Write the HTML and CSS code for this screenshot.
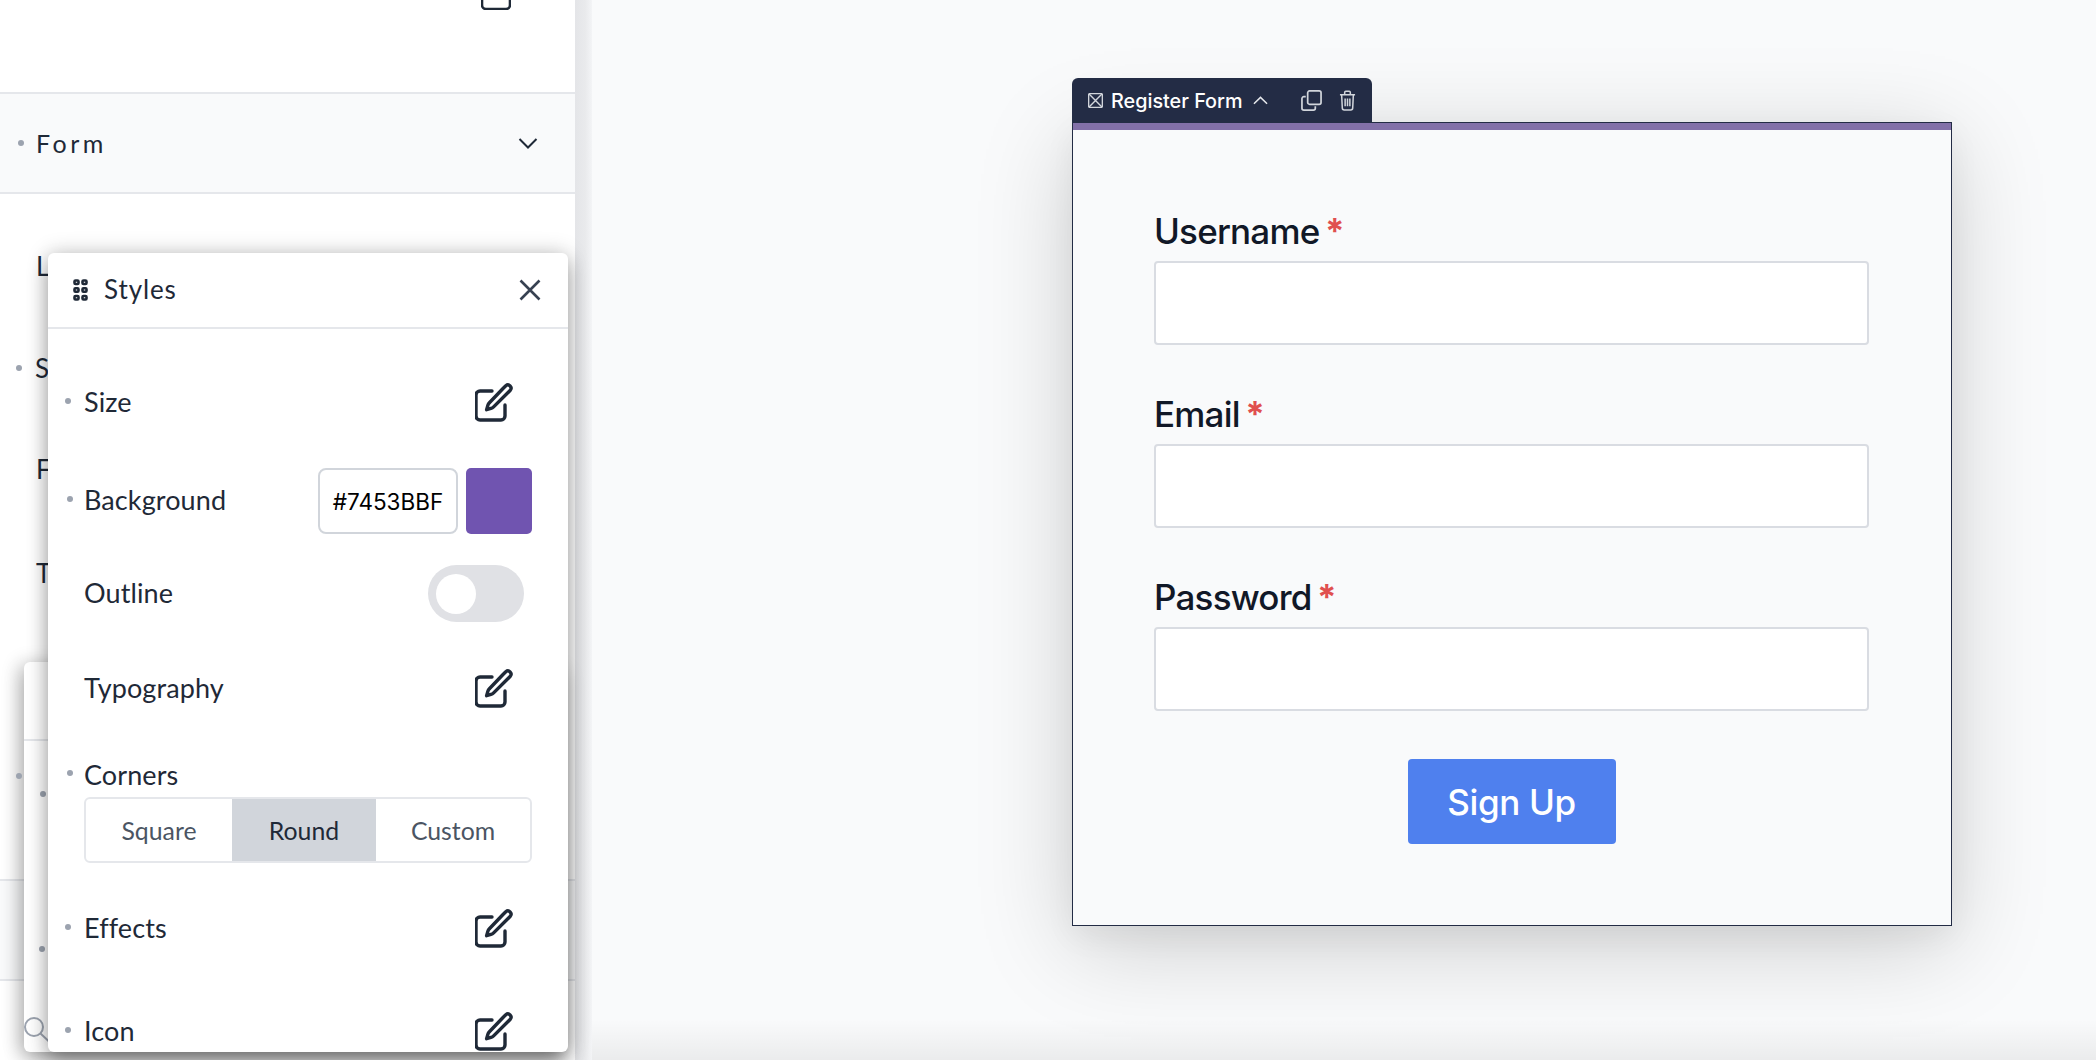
FILE: index.html
```html
<!DOCTYPE html>
<html lang="en">
<head>
<meta charset="utf-8">
<title>Register Form</title>
<link rel="stylesheet" href="styles.css">
</head>
<body>
<svg class="sprite" width="0" height="0">
  <symbol id="edit" viewBox="0 0 38 40">
    <path d="M28 5.500 30.800 2.700a3.200 3.200 0 0 1 4.500 4.500L18.600 23.900a6 6 0 0 1-2.600 1.500l-4.400 1.300 1.300-4.400a6 6 0 0 1 1.500-2.600L28 5.500Z"/>
    <path d="M30 22V33a4 4 0 0 1-4 4H5a4 4 0 0 1-4-4V12a4 4 0 0 1 4-4H17"/>
  </symbol>
</svg>
<aside class="sidebar">
  <div class="side-top">
    <svg class="top-icon" viewBox="0 0 30 10"><path d="M1 0V5a4 4 0 0 0 4 4H25a4 4 0 0 0 4-4V0"/></svg>
  </div>
  <div class="side-head">
    <span class="dot"></span><span class="side-title">Form</span>
    <svg class="chev" viewBox="0 0 20 12"><path d="M1.500 2 10 10.500 18.500 2"/></svg>
  </div>
  <div class="side-body">
    <div class="ghost ghost-l">L</div>
    <div class="ghost ghost-s"><span class="dot"></span>S</div>
    <div class="ghost ghost-f">F</div>
    <div class="ghost ghost-t">T</div>
  </div>
  <div class="back-band"></div>
  <div class="panel-back">
    <div class="back-line"></div>
    <div class="back-dots"><span class="dot dot-a"></span><span class="dot dot-b"></span><span class="dot dot-c"></span></div>
    <div class="back-search">
      <svg class="search" viewBox="0 0 26 25"><circle cx="10" cy="10" r="9"/><path d="M16.500 16.500 25 24.500"/></svg>
    </div>
  </div>
  <section class="panel">
    <header class="panel-head">
      <svg class="grip" viewBox="0 0 15 22"><rect x="1.500" y="1.500" width="4" height="3.500" rx="1"/><rect x="9.500" y="1.500" width="4" height="3.500" rx="1"/><rect x="1.500" y="9.200" width="4" height="3.500" rx="1"/><rect x="9.500" y="9.200" width="4" height="3.500" rx="1"/><rect x="1.500" y="17" width="4" height="3.500" rx="1"/><rect x="9.500" y="17" width="4" height="3.500" rx="1"/></svg>
      <span class="panel-title">Styles</span>
      <svg class="close" viewBox="0 0 22 22"><path d="M1.500 1.500 20.500 20.500M20.500 1.500 1.500 20.500"/></svg>
    </header>
    <div class="row row-size"><span class="dot"></span><span class="lbl">Size</span><svg class="edit"><use href="#edit"/></svg></div>
    <div class="row row-bg"><span class="dot dot-up"></span><span class="lbl lbl-up">Background</span>
      <span class="hex">#7453BBF</span><span class="swatch"></span></div>
    <div class="row row-outline"><span class="lbl lbl-plain lbl-up">Outline</span><span class="toggle"><span class="knob"></span></span></div>
    <div class="row row-typo"><span class="lbl lbl-plain">Typography</span><svg class="edit"><use href="#edit"/></svg></div>
    <div class="corners">
      <div class="corners-head"><span class="dot dot-up"></span><span class="lbl">Corners</span></div>
      <div class="seg"><span class="seg-item seg-a">Square</span><span class="seg-item seg-on">Round</span><span class="seg-item seg-c">Custom</span></div>
    </div>
    <div class="row row-effects"><span class="dot"></span><span class="lbl">Effects</span><svg class="edit"><use href="#edit"/></svg></div>
    <div class="row row-icon"><span class="dot"></span><span class="lbl">Icon</span><svg class="edit"><use href="#edit"/></svg></div>
  </section>
</aside>
<div class="gutter"></div>
<main class="canvas">
  <div class="toolbar">
    <svg class="tb-move" viewBox="0 0 14 14"><rect x=".6" y=".6" width="12.800" height="12.800" rx="1"/><path d="M1 1 13 13M13 1 1 13"/></svg>
    <span class="tb-title">Register Form</span>
    <svg class="tb-chev" viewBox="0 0 16 9"><path d="M1 8 8 1.200 15 8"/></svg>
    <svg class="tb-copy" viewBox="0 0 22 22"><rect x="7" y="1" width="14" height="14" rx="2"/><path d="M5 7H3a2 2 0 0 0-2 2V19a2 2 0 0 0 2 2H13a2 2 0 0 0 2-2V17"/></svg>
    <svg class="tb-trash" viewBox="0 0 18 22"><path d="M1 5H17M6 5V2.500A1.200 1.200 0 0 1 7.200 1.300H10.800A1.200 1.200 0 0 1 12 2.500V5M2.800 5 3.500 19a2 2 0 0 0 2 2H12.500a2 2 0 0 0 2-2L15.200 5M6.500 9V17M9 9V17M11.500 9V17"/></svg>
  </div>
  <form class="card">
    <div class="field">
      <label class="f-label">Username <span class="req">*</span></label>
      <div class="f-input"></div>
    </div>
    <div class="field">
      <label class="f-label">Email <span class="req">*</span></label>
      <div class="f-input"></div>
    </div>
    <div class="field">
      <label class="f-label">Password <span class="req">*</span></label>
      <div class="f-input"></div>
    </div>
    <div class="actions"><button class="submit" type="button">Sign Up</button></div>
  </form>
</main>
</body>
</html>
```
FILE: styles.css
```css
* { box-sizing: border-box; }
html, body { margin: 0; height: 1060px; overflow: hidden; }
body { display: flex; background: #f9fafb; font-family: "Lato", "Noto Sans", sans-serif; color: #1f2937; }
.sprite { position: absolute; }

.sidebar { position: relative; width: 575px; height: 1060px; background: #fff; flex: none; }
.gutter { width: 17px; flex: none; background: linear-gradient(90deg, #e4e5e8, #e9eaec 60%, #f3f4f6); }
.side-top { height: 94px; border-bottom: 2px solid #e5e7eb; padding: 0 0 0 481px; }
.top-icon { display: block; width: 30px; height: 10px; fill: none; stroke: #1f2937; stroke-width: 2.6; }
.side-head { height: 100px; background: #f9fafb; border-bottom: 2px solid #e5e7eb; display: flex; align-items: center; padding-left: 18px; }
.dot { width: 6px; height: 6px; border-radius: 50%; background: #9ca3af; flex: none; }
.side-title { margin-left: 12px; font-size: 25px; letter-spacing: 3.500px; }
.chev { margin-left: auto; margin-right: 37px; width: 20px; height: 12px; fill: none; stroke: #1f2937; stroke-width: 2; }
.ghost { position: absolute; left: 36px; font-size: 26px; }
.ghost-l { top: 250px; }
.ghost-s { top: 352px; left: 16px; display: flex; align-items: center; gap: 13px; }
.ghost-f { top: 453px; }
.ghost-t { top: 557px; }

.back-band { position: absolute; left: 0; right: 0; top: 879px; height: 102px; background: #f9fafb; border-top: 2px solid #e5e7eb; border-bottom: 2px solid #e5e7eb; }
.panel-back { position: absolute; left: 24px; top: 662px; width: 540px; height: 390px; background: #fff; border-radius: 6px; box-shadow: 0 10px 20px rgba(0,0,0,.25), -6px 0 18px rgba(0,0,0,.16); }
.back-line { margin-top: 77px; border-top: 2px solid #e5e7eb; }
.back-dots { position: absolute; left: -24px; top: 100px; }
.dot-a { position: absolute; left: 16px; top: 11px; }
.dot-b { position: absolute; left: 40px; top: 29px; }
.dot-c { position: absolute; left: 39px; top: 184px; }
.back-search { position: absolute; left: 0; top: 355px; }
.search { width: 26px; height: 25px; fill: none; stroke: #9ca3af; stroke-width: 2; display: block; }

.panel { position: absolute; left: 48px; top: 253px; width: 520px; height: 799px; background: #fff; border-radius: 6px; box-shadow: 0 10px 20px rgba(0,0,0,.28), 0 0 22px rgba(0,0,0,.2); overflow: hidden; }
.panel-head { height: 76px; border-bottom: 2px solid #e5e7eb; display: flex; align-items: center; padding: 0 27px 0 25px; }
.grip { width: 15px; height: 22px; fill: none; stroke: #1f2937; stroke-width: 2.6; }
.panel-title { margin: -2px 0 0 16px; font-size: 26px; letter-spacing: .9px; }
.close { margin-left: auto; width: 22px; height: 22px; fill: none; stroke: #374151; stroke-width: 2.6; }
.row { display: flex; align-items: center; padding: 0 0 0 17px; }
.lbl { font-size: 27px; margin-left: 13px; letter-spacing: .1px; }
.lbl-plain { margin-left: 19px; }
.lbl-up { margin-bottom: 3px; }
.edit { width: 38px; height: 40px; margin: 3px 55px 0 auto; fill: none; stroke: #1f2937; stroke-width: 3.4; stroke-linejoin: round; stroke-linecap: round; }
.row-size { height: 70px; margin-top: 37px; }
.row-bg { height: 66px; margin-top: 32px; }
.row-outline { height: 57px; margin-top: 31px; }
.row-typo { height: 40px; margin-top: 45px; }
.dot-up { margin: -4px -2px 0 2px; }
.hex { margin-left: auto; width: 140px; height: 66px; border: 2px solid #d1d5db; border-radius: 8px; display: flex; align-items: center; justify-content: center; font: 22.500px "Inter", sans-serif; color: #000; }
.swatch { width: 66px; height: 66px; margin: 0 36px 0 8px; background: #7054b0; border-radius: 5px; }
.toggle { margin-left: auto; margin-right: 44px; width: 96px; height: 57px; border-radius: 29px; background: #e0e1e5; padding: 9px 8px; }
.knob { display: block; width: 40px; height: 40px; border-radius: 50%; background: #fff; }
.corners { margin-top: 51px; padding: 0 36px 0 17px; }
.corners-head { display: flex; align-items: center; }
.seg { margin: 6px 0 0 19px; height: 66px; display: flex; border: 2px solid #e5e7eb; border-radius: 6px; overflow: hidden; }
.seg-item { display: flex; align-items: center; justify-content: center; font-size: 24.800px; color: #4b5563; }
.seg-a { width: 146px; }
.seg-on { width: 144px; background: #d1d5db; color: #1f2937; }
.seg-c { flex: 1; }
.row-effects { height: 40px; margin-top: 44px; }
.row-icon { height: 40px; margin-top: 63px; }

.canvas { flex: 1; padding: 78px 0 0 480px; position: relative; }
.canvas::after { content: ""; position: absolute; left: 0; right: 0; bottom: 0; height: 40px; background: linear-gradient(transparent, rgba(0,0,0,.06)); }
.toolbar { width: 300px; height: 45px; background: #232c45; border-radius: 6px 6px 0 0; display: flex; align-items: center; padding-left: 16px; color: #fff; position: relative; z-index: 1; margin-bottom: -1px; }
.tb-move { width: 15px; height: 15px; fill: none; stroke: #d1d5db; stroke-width: 1.300; }
.tb-title { margin-left: 8px; font: 500 19.800px "Inter", sans-serif; }
.tb-chev { width: 15px; height: 9px; margin-left: 10px; fill: none; stroke: #e5e7eb; stroke-width: 1.600; }
.tb-copy { width: 21px; height: 21px; margin-left: 33px; fill: none; stroke: #d1d5db; stroke-width: 1.800; }
.tb-trash { width: 17px; height: 21px; margin-left: 17px; fill: none; stroke: #d1d5db; stroke-width: 1.600; }

.card { width: 880px; height: 804px; background: #f9fafb; border: 1.500px solid #232c45; padding: 0 82px 0 81px; box-shadow: 0 20px 90px rgba(0,0,0,.18), 0 10px 30px rgba(0,0,0,.05); }
.card::before { content: ""; display: block; height: 7px; margin: 0 -82px 78.500px -81px; background: #8270a8; }
.field { margin-bottom: 47px; }
.f-label { display: block; font: 500 35px/44px "Inter", sans-serif; color: #111827; letter-spacing: -.8px; margin-bottom: 8px; }
.req { color: #e04f4f; font-weight: 700; margin-left: -3px; }
.f-input { height: 84px; background: #fff; border: 2px solid #d9dce2; border-radius: 4px; }
.actions { display: flex; justify-content: center; margin-top: 48.500px; }
.submit { width: 208px; height: 85px; border: 0; background: #4f80ee; color: #fff; border-radius: 4px; font: 500 35px "Inter", sans-serif; letter-spacing: -.35px; }
```
